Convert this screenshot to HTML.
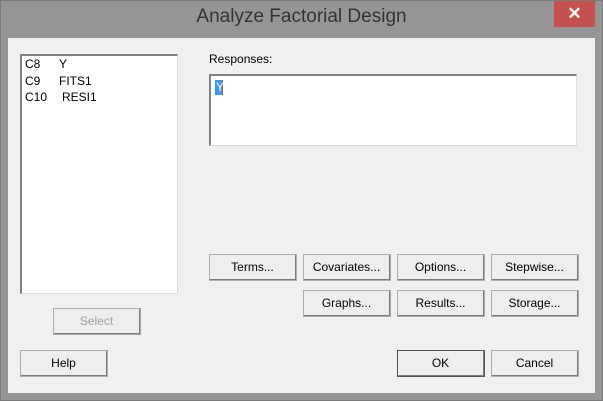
<!DOCTYPE html>
<html><head><style>
*{margin:0;padding:0;box-sizing:border-box}
body{width:603px;height:401px;background:#959595;position:relative;overflow:hidden;font-family:"Liberation Sans",sans-serif;font-size:12px;color:#000}
.frame{position:absolute;left:0;top:0;width:603px;height:401px;border:1px solid #7a7a7a}
.title{position:absolute;left:0;top:6px;width:603px;text-align:center;font-size:19px;color:#333}
.close{position:absolute;left:554px;top:1px;width:41px;height:26px;background:#c75050;color:#fff;text-align:center;font-size:17px;line-height:26px;font-weight:bold}
.content{position:absolute;left:8px;top:38px;width:587px;height:355px;background:#f0f0f0}
.box{position:absolute;background:#fff;border:1px solid #dcdcdc;border-top:2px solid #828282;border-left:2px solid #828282}
.btn{position:absolute;width:88px;height:27px;background:#eeeeee;border:1px solid #fff;border-right:2px solid #7a7a7a;border-bottom:2px solid #7a7a7a;outline:1px solid #adadad;outline-offset:-1px;text-align:center;line-height:24px;font-size:12px}
.abs{position:absolute}
</style></head><body>
<div class="frame"></div>
<div class="title">Analyze Factorial Design</div>
<div class="close">✕</div>
<div class="content"></div>
<div class="box" style="left:20px;top:54px;width:158px;height:240px"></div>
<div class="abs" style="left:25px;top:57px">C8</div><div class="abs" style="left:59px;top:57px">Y</div>
<div class="abs" style="left:25px;top:74px">C9</div><div class="abs" style="left:59px;top:74px">FITS1</div>
<div class="abs" style="left:25px;top:90px">C10</div><div class="abs" style="left:62px;top:90px">RESI1</div>
<div class="abs" style="left:209px;top:52px">Responses:</div>
<div class="box" style="left:209px;top:74px;width:368px;height:72px"></div>
<div class="abs" style="left:215px;top:80px;background:#3399ff;color:#fff;height:15px;line-height:15px;width:8px;padding-left:1px;border-right:1px solid #c06000">Y</div>
<div class="btn" style="left:209px;top:254px">Terms...</div>
<div class="btn" style="left:303px;top:254px">Covariates...</div>
<div class="btn" style="left:397px;top:254px">Options...</div>
<div class="btn" style="left:491px;top:254px">Stepwise...</div>
<div class="btn" style="left:303px;top:290px">Graphs...</div>
<div class="btn" style="left:397px;top:290px">Results...</div>
<div class="btn" style="left:491px;top:290px">Storage...</div>
<div class="btn" style="left:53px;top:308px;color:#a0a0a0">Select</div>
<div class="btn" style="left:20px;top:350px">Help</div>
<div class="btn" style="left:397px;top:350px;outline:1px solid #555">OK</div>
<div class="btn" style="left:491px;top:350px">Cancel</div>
</body></html>
